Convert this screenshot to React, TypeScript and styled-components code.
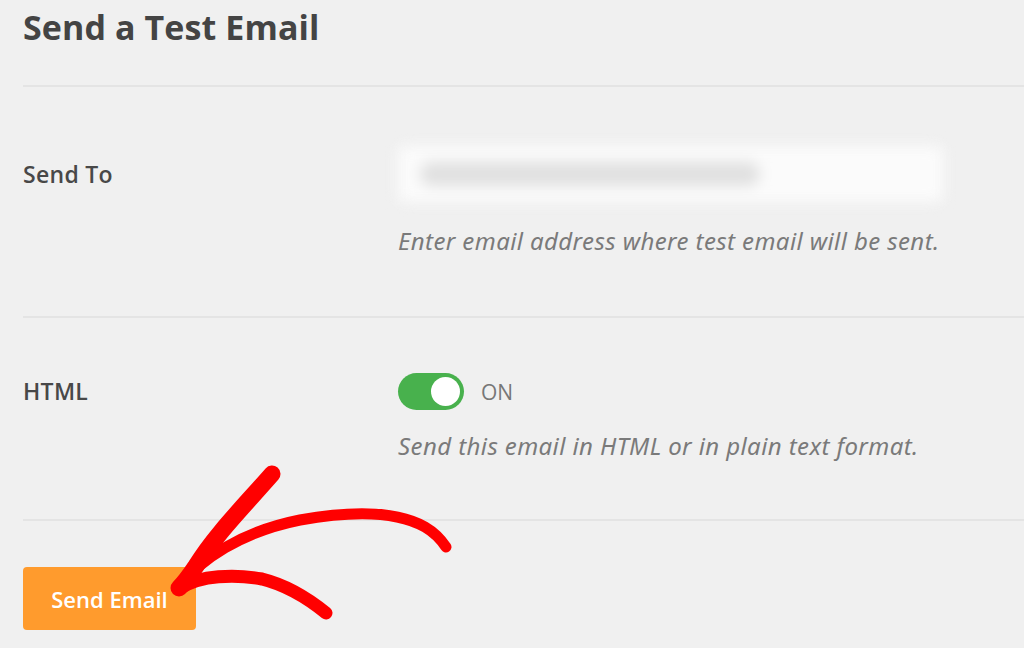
import { useState } from "react";
import styled, { createGlobalStyle } from "styled-components";

const GlobalStyle = createGlobalStyle`
  html, body {
    margin: 0;
    padding: 0;
    background: #f0f0f0;
  }
  body {
    font-family: "Open Sans", "Noto Sans", Arial, sans-serif;
    overflow: hidden;
  }
`;

const Page = styled.div`
  position: relative;
  width: 1024px;
  height: 648px;
  padding-left: 23px;
  box-sizing: border-box;
  background: #f0f0f0;
  overflow: hidden;
`;

const Title = styled.h1`
  margin: 0;
  padding-top: 4px;
  height: 85px;
  box-sizing: border-box;
  font-size: 34px;
  line-height: 46px;
  font-weight: 700;
  color: #444;
  letter-spacing: 0.1px;
`;

const Divider = styled.hr`
  margin: 0;
  border: 0;
  height: 2px;
  background: #e4e4e4;
`;

const Row = styled.div<{ $height: number; $top: number }>`
  display: grid;
  grid-template-columns: 375px 1fr;
  align-items: start;
  height: ${({ $height }) => $height}px;
  padding-top: ${({ $top }) => $top}px;
  box-sizing: border-box;
`;

const Label = styled.div<{ $offset: number }>`
  padding-top: ${({ $offset }) => $offset}px;
  font-size: 23px;
  line-height: 30px;
  font-weight: 600;
  color: #484848;
  letter-spacing: 0.3px;
`;

const Field = styled.div`
  display: flex;
  flex-direction: column;
`;

const BlurredInput = styled.div`
  width: 545px;
  height: 56px;
  display: flex;
  align-items: center;
  padding-left: 22px;
  box-sizing: border-box;
  background: #fbfbfb;
  border-radius: 6px;
  filter: blur(7px);
`;

const BlurredText = styled.div`
  width: 340px;
  height: 24px;
  border-radius: 12px;
  background: #e0e0e0;
`;

const Description = styled.p<{ $gap: number }>`
  margin: ${({ $gap }) => $gap}px 0 0;
  font-family: "Noto Sans", "Lato", sans-serif;
  font-style: italic;
  font-size: 24px;
  line-height: 30px;
  letter-spacing: 0.4px;
  color: #7a7a7a;
`;

const ToggleLine = styled.div`
  display: flex;
  align-items: center;
  gap: 17px;
`;

const Switch = styled.button<{ $on: boolean }>`
  position: relative;
  width: 66px;
  height: 37px;
  padding: 0;
  border: 0;
  border-radius: 19px;
  background: ${({ $on }) => ($on ? "#48b14d" : "#c4c4c4")};
  cursor: pointer;
`;

const Knob = styled.span<{ $on: boolean }>`
  position: absolute;
  top: 4px;
  left: ${({ $on }) => ($on ? "33px" : "4px")};
  width: 29px;
  height: 29px;
  border-radius: 50%;
  background: #fff;
`;

const ToggleText = styled.span`
  font-size: 21px;
  color: #777;
  font-weight: 400;
`;

const Footer = styled.div`
  padding-top: 46px;
`;

const SendButton = styled.button`
  width: 173px;
  height: 63px;
  border: 0;
  border-radius: 4px;
  background: #ff9b2d;
  color: #fff;
  font-family: "Open Sans", "Noto Sans", sans-serif;
  font-size: 22px;
  font-weight: 600;
  cursor: pointer;
`;

const Arrow = styled.svg`
  position: absolute;
  left: 0;
  top: 0;
  pointer-events: none;
`;

export default function App() {
  const [html, setHtml] = useState(true);

  return (
    <>
      <GlobalStyle />
      <Page>
        <Title>Send a Test Email</Title>
        <Divider />
        <Row $height={229} $top={59}>
          <Label $offset={13}>Send To</Label>
          <Field>
            <BlurredInput>
              <BlurredText />
            </BlurredInput>
            <Description $gap={24}>
              Enter email address where test email will be sent.
            </Description>
          </Field>
        </Row>
        <Divider />
        <Row $height={201} $top={55}>
          <Label $offset={3}>HTML</Label>
          <Field>
            <ToggleLine>
              <Switch $on={html} onClick={() => setHtml(!html)}>
                <Knob $on={html} />
              </Switch>
              <ToggleText>{html ? "ON" : "OFF"}</ToggleText>
            </ToggleLine>
            <Description $gap={21}>
              Send this email in HTML or in plain text format.
            </Description>
          </Field>
        </Row>
        <Divider />
        <Footer>
          <SendButton>Send Email</SendButton>
        </Footer>
        <Arrow width="1024" height="648" viewBox="0 0 1024 648">
          <g fill="none" stroke="#ff0000" strokeLinecap="round" strokeLinejoin="round">
            <path d="M272 474 C 245 505, 215 535, 196 566 C 188 578, 183 584, 179 588" strokeWidth="17" />
            <path d="M180 586 C 200 560, 240 532, 300 520 C 350 511, 395 510, 425 527 C 437 534, 442 541, 446 547" strokeWidth="11" />
            <path d="M181 588 C 200 575, 235 574, 262 579 C 290 586, 310 600, 326 613" strokeWidth="13" />
          </g>
        </Arrow>
      </Page>
    </>
  );
}
